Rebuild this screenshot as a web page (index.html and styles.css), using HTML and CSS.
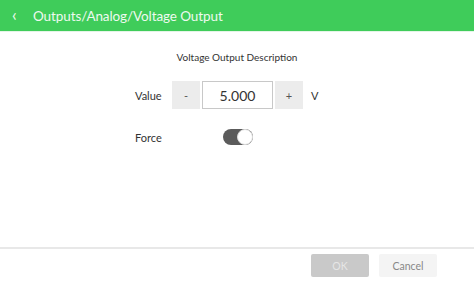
FILE: index.html
```html
<!DOCTYPE html>
<html lang="en">
<head>
  <meta charset="UTF-8" />
  <title>Voltage Output</title>
  <link rel="stylesheet" href="styles.css">
</head>
<body>
<div class="dialog">
  <div class="header">
    <span class="back">&lsaquo;</span>
    <span class="title">Outputs/Analog/Voltage Output</span>
  </div>

  <div class="content">
    <p class="desc">Voltage Output Description</p>

    <div class="row">
      <span class="label">Value</span>
      <button class="step">-</button>
      <input class="value" type="text" value="5.000" />
      <button class="step">+</button>
      <span class="unit">V</span>
    </div>

    <div class="row">
      <span class="label">Force</span>
      <span class="switch"><span class="knob"></span></span>
    </div>
  </div>

  <div class="footer">
    <button class="btn ok" disabled>OK</button>
    <button class="btn cancel">Cancel</button>
  </div>
</div>
</body>
</html>
```

FILE: styles.css
```css
body {
  margin: 0;
  font-family: "Lato", "Noto Sans", sans-serif;
  background: #fff;
}
.dialog {
  width: 474px;
  height: 284px;
  display: flex;
  flex-direction: column;
}
.header {
  height: 31px;
  background: #3fcc5a;
  color: #eefaf0;
  display: flex;
  align-items: center;
  border-bottom: 1px solid #e4f5e7;
}
.back {
  width: 33px;
  box-sizing: border-box;
  padding-left: 12px;
  font-size: 17px;
  margin-top: -3px;
}
.title {
  font-size: 13.5px;
  letter-spacing: -0.1px;
}
.content {
  flex: 1;
  display: flex;
  flex-direction: column;
  align-items: center;
}
.desc {
  margin: 19px 0 18px;
  font-size: 10px;
  color: #333;
}
.row {
  display: flex;
  align-items: center;
  width: 206px;
  margin-left: 2px;
  height: 28px;
  margin-bottom: 14px;
  font-size: 11px;
  color: #333;
}
.label {
  width: 37px;
}
.step {
  width: 28px;
  height: 28px;
  border: none;
  background: #ececec;
  color: #555;
  font-family: inherit;
  font-size: 11px;
  padding: 0;
}
.value {
  width: 71px;
  height: 28px;
  box-sizing: border-box;
  margin: 0 2px 0 2px;
  border: 1px solid #c8c8c8;
  text-align: center;
  font-family: inherit;
  font-size: 14px;
  color: #333;
}
.unit {
  margin-left: 8px;
}
.switch {
  margin-left: 51px;
  width: 30px;
  height: 16px;
  border-radius: 8px;
  background: #5b5b5b;
  position: relative;
}
.knob {
  position: absolute;
  right: 0;
  top: 0;
  width: 16px;
  height: 16px;
  border-radius: 50%;
  background: #fff;
  box-sizing: border-box;
  border: 1px solid #ddd;
}
.footer {
  height: 30px;
  border-top: 2px solid #e8e8e8;
  display: flex;
  justify-content: flex-end;
  align-items: flex-start;
  padding: 5px 37px 0 0;
  gap: 10px;
}
.btn {
  width: 58px;
  height: 23px;
  border: none;
  border-radius: 2px;
  font-family: inherit;
  font-size: 10.5px;
  padding: 0;
}
.ok {
  background: #c9c9c9;
  color: #e6e6e6;
}
.cancel {
  background: #f4f4f4;
  color: #888;
}
```
